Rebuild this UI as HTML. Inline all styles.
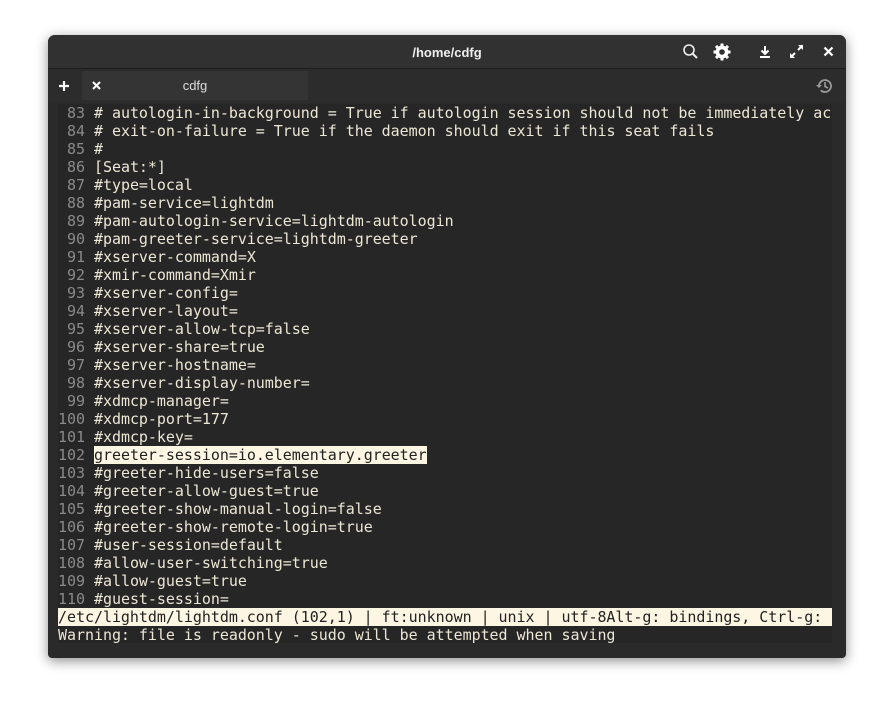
<!DOCTYPE html>
<html><head><meta charset="utf-8"><style>
body{margin:0;width:894px;height:720px;background:#fff;position:relative;overflow:hidden;font-family:"Liberation Sans",sans-serif}
.win{position:absolute;left:48px;top:35px;width:798px;height:623px;background:#2a2a2a;border-radius:7px 7px 4px 4px;box-shadow:0 3px 12px rgba(0,0,0,.45);overflow:hidden}
.hdr{position:absolute;left:0;top:0;width:798px;height:33px;background:#313131;border-bottom:1px solid #1e1e1e}
.title{position:absolute;left:0;right:0;top:10px;text-align:center;color:#eee;font-weight:bold;font-size:13px}
.tabs{position:absolute;left:0;top:34px;width:798px;height:34px;background:#2c2c2c}
.tab{position:absolute;left:34px;top:2px;width:226px;height:29px;background:#343434;border-radius:2px}
.term{position:absolute;left:10px;top:69px;width:774px;height:539px;background:#262626;font-family:"DejaVu Sans Mono","Liberation Mono",monospace;font-size:15px;line-height:18px;letter-spacing:-0.04px;color:#ece6d4;white-space:pre}
.ln{color:#8a8a8a}
.hl{background:#fdf6e3;color:#222}
.st{background:#fdf6e3;color:#222;display:block;width:774px}
svg{position:absolute}
</style></head><body>
<div class="win">
<div class="hdr"><div class="title">/home/cdfg</div>
<svg style="left:634px;top:8px" width="18" height="18" viewBox="0 0 18 18"><circle cx="7" cy="7" r="5" fill="none" stroke="#eee" stroke-width="1.6"/><path d="M10.5 10.5L15 15" stroke="#eee" stroke-width="2"/></svg>
<svg style="left:664px;top:7px" width="20" height="20" viewBox="0 0 20 20"><g fill="#fff"><circle cx="10" cy="10" r="6.5"/><rect x="8.5" y="1.5" width="3" height="17"/><rect x="1.5" y="8.5" width="17" height="3"/><rect x="8.5" y="1.5" width="3" height="17" transform="rotate(45 10 10)"/><rect x="8.5" y="1.5" width="3" height="17" transform="rotate(-45 10 10)"/></g><circle cx="10" cy="10" r="2.8" fill="#313131"/></svg>
<svg style="left:710px;top:10px" width="14" height="14" viewBox="0 0 14 14"><path d="M7 1v8M3.5 5.5L7 9l3.5-3.5" stroke="#fff" stroke-width="2" fill="none"/><rect x="2" y="11" width="10" height="2" fill="#fff"/></svg>
<svg style="left:741px;top:9px" width="15" height="15" viewBox="0 0 15 15"><path d="M9 1h5v5zM1 9v5h5z" fill="#fff"/><path d="M12 3L9 6M3 12l3-3" stroke="#fff" stroke-width="2"/></svg>
<svg style="left:775px;top:11px" width="11" height="11" viewBox="0 0 11 11"><path d="M1.5 1.5l8 8M9.5 1.5l-8 8" stroke="#fff" stroke-width="2.2"/></svg>
</div>
<div class="tabs">
<svg style="left:10px;top:11px" width="12" height="12" viewBox="0 0 12 12"><path d="M6 1v10M1 6h10" stroke="#fff" stroke-width="2.2"/></svg>
<div class="tab">
<svg style="left:10px;top:10px" width="9" height="9" viewBox="0 0 9 9"><path d="M1 1l7 7M8 1l-7 7" stroke="#fff" stroke-width="2"/></svg>
<div style="position:absolute;left:0;right:0;top:7px;text-align:center;color:#ddd;font-size:13px">cdfg</div></div>
<svg style="left:767px;top:8px" width="18" height="18" viewBox="0 0 18 18"><path d="M4 9a6 6 0 1 1 1.8 4.3" stroke="#9a9a9a" stroke-width="1.8" fill="none"/><path d="M1 8h6L4 11z" fill="#9a9a9a"/><path d="M10 5v4.5l3 1.5" stroke="#9a9a9a" stroke-width="1.6" fill="none"/></svg>
</div>
<div class="term"><span class="ln"> 83</span> # autologin-in-background = True if autologin session should not be immediately ac
<span class="ln"> 84</span> # exit-on-failure = True if the daemon should exit if this seat fails
<span class="ln"> 85</span> #
<span class="ln"> 86</span> [Seat:*]
<span class="ln"> 87</span> #type=local
<span class="ln"> 88</span> #pam-service=lightdm
<span class="ln"> 89</span> #pam-autologin-service=lightdm-autologin
<span class="ln"> 90</span> #pam-greeter-service=lightdm-greeter
<span class="ln"> 91</span> #xserver-command=X
<span class="ln"> 92</span> #xmir-command=Xmir
<span class="ln"> 93</span> #xserver-config=
<span class="ln"> 94</span> #xserver-layout=
<span class="ln"> 95</span> #xserver-allow-tcp=false
<span class="ln"> 96</span> #xserver-share=true
<span class="ln"> 97</span> #xserver-hostname=
<span class="ln"> 98</span> #xserver-display-number=
<span class="ln"> 99</span> #xdmcp-manager=
<span class="ln">100</span> #xdmcp-port=177
<span class="ln">101</span> #xdmcp-key=
<span class="ln">102</span> <span class="hl">greeter-session=io.elementary.greeter</span>
<span class="ln">103</span> #greeter-hide-users=false
<span class="ln">104</span> #greeter-allow-guest=true
<span class="ln">105</span> #greeter-show-manual-login=false
<span class="ln">106</span> #greeter-show-remote-login=true
<span class="ln">107</span> #user-session=default
<span class="ln">108</span> #allow-user-switching=true
<span class="ln">109</span> #allow-guest=true
<span class="ln">110</span> #guest-session=
<span class="st">/etc/lightdm/lightdm.conf (102,1) | ft:unknown | unix | utf-8Alt-g: bindings, Ctrl-g:</span>Warning: file is readonly - sudo will be attempted when saving</div>
</div>
</body></html>
